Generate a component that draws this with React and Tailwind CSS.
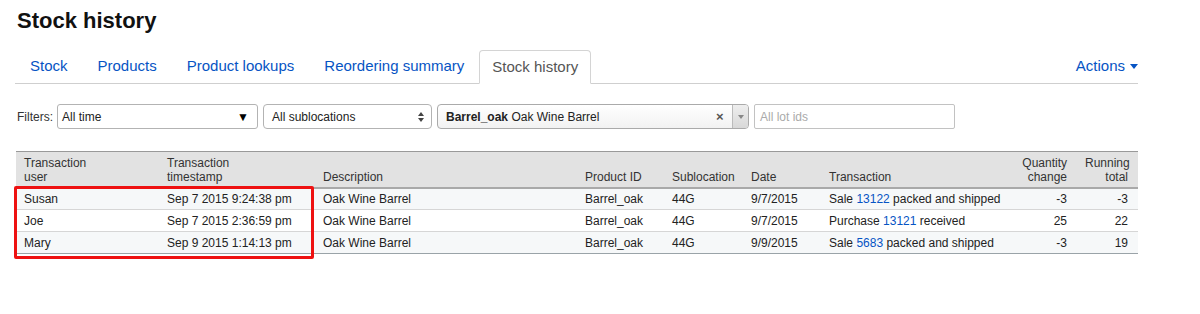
import React from 'react';

const tabs = ['Stock', 'Products', 'Product lookups', 'Reordering summary'];

const rows = [
  { user: 'Susan', ts: 'Sep 7 2015 9:24:38 pm', date: '9/7/2015', kind: 'Sale', id: '13122', rest: 'packed and shipped', qty: '-3', total: '-3' },
  { user: 'Joe', ts: 'Sep 7 2015 2:36:59 pm', date: '9/7/2015', kind: 'Purchase', id: '13121', rest: 'received', qty: '25', total: '22' },
  { user: 'Mary', ts: 'Sep 9 2015 1:14:13 pm', date: '9/9/2015', kind: 'Sale', id: '5683', rest: 'packed and shipped', qty: '-3', total: '19' },
];

function Caret({ className }) {
  return (
    <svg width="8" height="5" viewBox="0 0 8 5" className={className}>
      <path d="M0 0h8L4 5z" fill="currentColor" />
    </svg>
  );
}

export default function App() {
  return (
    <div className="w-[1200px] h-[314px] bg-white text-[#222] font-['Liberation_Sans',Arial,sans-serif]">
      <div className="ml-[15px] w-[1123px]">
        {/* Title */}
        <h1 className="pt-[8px] pl-[2px] text-[22px] leading-[26px] font-bold text-[#111]">Stock history</h1>

        {/* Tabs */}
        <div className="mt-[16px] h-[34px] flex items-end border-b border-[#cfcfcf]">
          {tabs.map((t) => (
            <a key={t} className="h-[33px] px-[15px] last:pr-[12px] flex items-center text-[15px] text-[#0654c4] cursor-pointer">
              {t}
            </a>
          ))}
          <div className="h-[34px] -mb-px px-[12px] flex items-center text-[15px] text-[#555] bg-white border border-[#d4d4d4] border-b-white rounded-t-[4px]">
            Stock history
          </div>
          <a className="ml-auto h-[33px] flex items-center gap-[5px] text-[15px] text-[#0654c4] cursor-pointer">
            Actions <Caret className="text-[#0654c4]" />
          </a>
        </div>

        {/* Filters */}
        <div className="mt-[20px] h-[25px] flex items-center text-[12px]">
          <span className="ml-[2px] text-[#333]">Filters:</span>
          <div className="ml-[4px] w-[201px] h-[25px] border border-[#b3b3b3] rounded-[3px] flex items-center pl-[4px] pr-[8px]">
            <span className="flex-1">All time</span>
            <span className="text-[12px] text-black">▼</span>
          </div>
          <div className="ml-[5px] w-[169px] h-[25px] border border-[#b3b3b3] rounded-[4px] flex items-center pl-[8px] pr-[7px]">
            <span className="flex-1">All sublocations</span>
            <svg width="6" height="10" viewBox="0 0 6 10" className="text-[#444]">
              <path d="M0 4L3 0L6 4zM0 6h6L3 10z" fill="currentColor" />
            </svg>
          </div>
          <div className="ml-[5px] w-[312px] h-[25px] border border-[#aaa] rounded-[4px] flex items-center bg-gradient-to-b from-white to-[#f2f2f2]">
            <span className="flex-1 pl-[8px]">
              <b>Barrel_oak</b> Oak Wine Barrel
            </span>
            <span className="w-[16px] text-[13px] text-[#555] font-bold">×</span>
            <div className="w-[16px] h-full border-l border-[#bbb] bg-gradient-to-b from-[#eee] to-[#d8d8d8] rounded-r-[3px] flex items-center justify-center">
              <svg width="6" height="4" viewBox="0 0 6 4"><path d="M0 0h6L3 4z" fill="#888" /></svg>
            </div>
          </div>
          <div className="ml-[5px] w-[201px] h-[25px] border border-[#c2c2c2] rounded-[2px] flex items-center pl-[5px] text-[#aaa]">
            All lot ids
          </div>
        </div>

        {/* Table */}
        <div className="relative mt-[22px] ml-px w-[1122px]">
          <table className="w-full table-fixed border-collapse text-[12px] text-[#222]">
            <colgroup>
              <col className="w-[143px]" />
              <col className="w-[156px]" />
              <col className="w-[262px]" />
              <col className="w-[87px]" />
              <col className="w-[79px]" />
              <col className="w-[78px]" />
              <col className="w-[189px]" />
              <col className="w-[65px]" />
              <col className="w-[63px]" />
            </colgroup>
            <thead>
              <tr className="h-[36px] bg-[#e2e2e2] border-t border-[#999] border-b-2 border-b-[#a9a9a9] align-bottom leading-[14px] text-[#333]">
                <th className="font-normal text-left px-[8px] pb-[3px]">Transaction<br />user</th>
                <th className="font-normal text-left px-[8px] pb-[3px]">Transaction<br />timestamp</th>
                <th className="font-normal text-left px-[8px] pb-[3px]">Description</th>
                <th className="font-normal text-left px-[8px] pb-[3px]">Product ID</th>
                <th className="font-normal text-left px-[8px] pb-[3px]">Sublocation</th>
                <th className="font-normal text-left px-[8px] pb-[3px]">Date</th>
                <th className="font-normal text-left px-[8px] pb-[3px]">Transaction</th>
                <th className="font-normal text-right px-[8px] pb-[3px]">Quantity<br />change</th>
                <th className="font-normal text-right px-[10px] pb-[3px]">Running<br />total</th>
              </tr>
            </thead>
            <tbody>
              {rows.map((r, i) => (
                <tr key={r.user} className={`h-[22px] border-b ${i === rows.length - 1 ? 'border-[#9aa3a8]' : 'border-[#d6d6d6]'} ${i % 2 === 0 ? 'bg-[#f6f8f9]' : 'bg-white'}`}>
                  <td className="px-[8px]">{r.user}</td>
                  <td className="px-[8px]">{r.ts}</td>
                  <td className="px-[8px]">Oak Wine Barrel</td>
                  <td className="px-[8px]">Barrel_oak</td>
                  <td className="px-[8px]">44G</td>
                  <td className="px-[8px]">{r.date}</td>
                  <td className="px-[8px] whitespace-nowrap">
                    {r.kind} <span className="text-[#0654c4]">{r.id}</span> {r.rest}
                  </td>
                  <td className="px-[8px] text-right">{r.qty}</td>
                  <td className="px-[10px] text-right">{r.total}</td>
                </tr>
              ))}
            </tbody>
          </table>
          {/* highlight annotation */}
          <div className="absolute left-[-2px] top-[35px] w-[300px] h-[73px] border-[3px] border-[#ee1111] rounded-[2px] pointer-events-none" />
        </div>
      </div>
    </div>
  );
}
